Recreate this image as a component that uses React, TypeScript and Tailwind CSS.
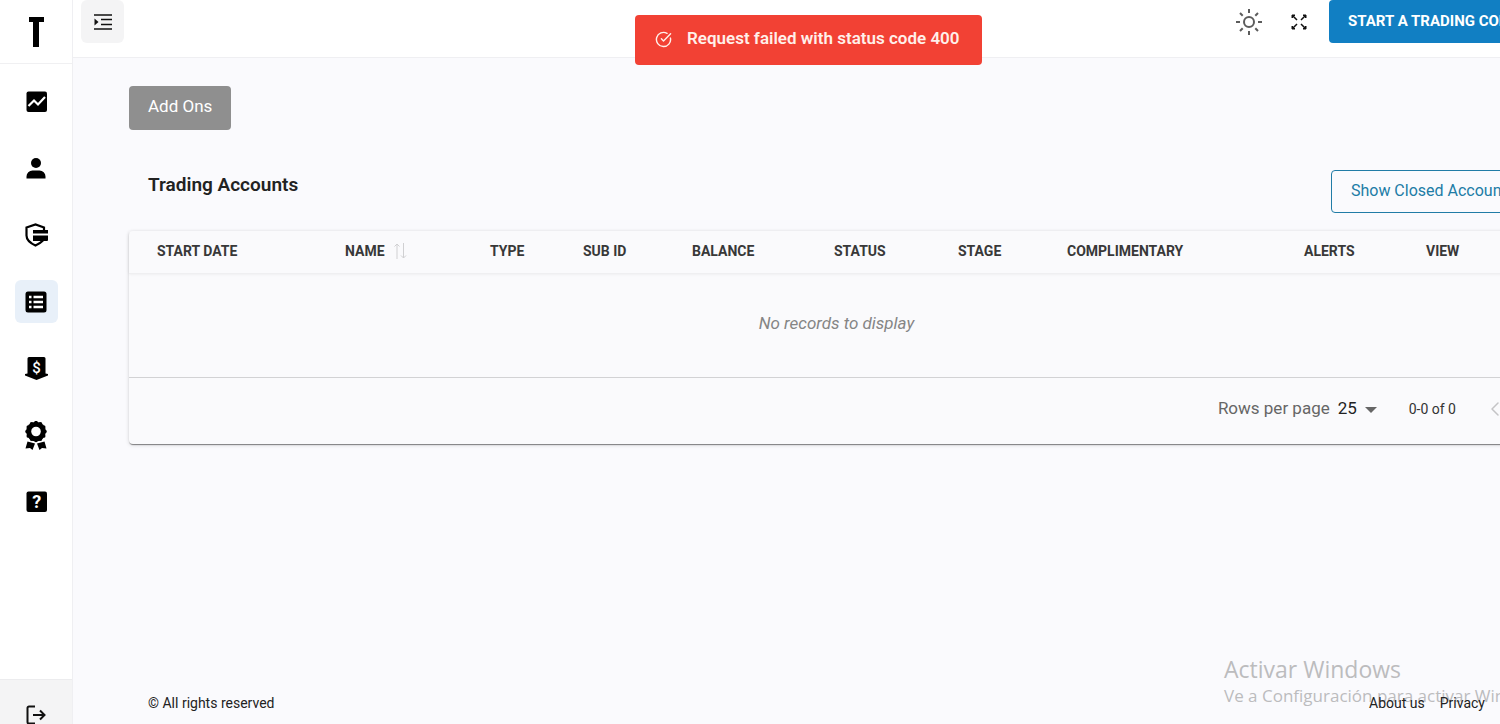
import type { ReactNode } from "react";
import { ChevronLeft, ChevronRight, CircleCheckBig } from "lucide-react";
import { clsx } from "clsx";

type IconProps = {
  children: ReactNode;
};

function NavIcon({ children }: IconProps) {
  return (
    <svg viewBox="0 0 24 24" className="h-6 w-6" fill="currentColor" aria-hidden="true">
      {children}
    </svg>
  );
}

const scallops = Array.from({ length: 12 }, (_, i) => {
  const angle = (i * Math.PI) / 6;
  return { cx: 12 + 8.8 * Math.cos(angle), cy: 10.5 + 8.8 * Math.sin(angle) };
});

const navItems = [
  {
    label: "Dashboard",
    icon: (
      <NavIcon>
        <rect x="2.5" y="2.5" width="20.5" height="20.5" rx="2" />
        <path d="M4.5 17 10 11.5l4 4 7-7.5" fill="none" stroke="#fff" strokeWidth="2.2" />
      </NavIcon>
    )
  },
  {
    label: "Profile",
    icon: (
      <NavIcon>
        <circle cx="12" cy="7" r="5" />
        <path d="M2.5 22.5v-2a6 6 0 0 1 6-6h7a6 6 0 0 1 6 6v2z" />
      </NavIcon>
    )
  },
  {
    label: "Subscriptions",
    icon: (
      <NavIcon>
        <path
          d="M20 9V4.5L11.5 1.500 2.500 4.500v8c0 4.500 3.500 7.500 9 10 3.500-1.500 6-3.500 7.500-5"
          fill="none"
          stroke="currentColor"
          strokeWidth="2.2"
        />
        <path d="M9 7h15v3.500H9zM9 12.500h15v4.500a1 1 0 0 1-1 1H9z" />
      </NavIcon>
    )
  },
  {
    label: "Accounts",
    active: true,
    icon: (
      <NavIcon>
        <rect x="1.5" y="1.5" width="21" height="21" rx="2.5" />
        <path
          d="M5 7h2.500M9.500 7H19M5 12h2.500M9.500 12H19M5 17h2.500M9.500 17H19"
          stroke="#fff"
          strokeWidth="2.4"
        />
      </NavIcon>
    )
  },
  {
    label: "Payouts",
    icon: (
      <NavIcon>
        <path d="M5 0h15a1.500 1.500 0 0 1 1.500 1.500V16.500l2.500.500V18.500l-11.500 4.500L1 18.500v-1.500l2.500-.500V1.500A1.500 1.500 0 0 1 5 0z" />
        <text x="12.5" y="16" textAnchor="middle" fill="#fff" fontSize="15" fontWeight="500" fontFamily="Roboto, sans-serif">
          $
        </text>
      </NavIcon>
    )
  },
  {
    label: "Certificates",
    icon: (
      <svg viewBox="0 0 24 30" className="h-[30px] w-6" fill="currentColor" aria-hidden="true">
        {scallops.map(({ cx, cy }) => (
          <circle key={`${cx}-${cy}`} cx={cx} cy={cy} r="1.9" />
        ))}
        <circle cx="12" cy="10.5" r="9.8" />
        <circle cx="12" cy="10.5" r="4.8" fill="#fff" />
        <path d="M3.500 20.500 11 22.500 8.500 29 6 27l-4.500.500zM20.500 20.500 13 22.500l2.500 6.500 2.500-2 4.500.500z" />
      </svg>
    )
  },
  {
    label: "Help",
    icon: (
      <NavIcon>
        <rect x="2.5" y="0.5" width="20.5" height="20.5" rx="2" />
        <text x="12.75" y="17" textAnchor="middle" fill="#fff" fontSize="18" fontWeight="700" fontFamily="Roboto, sans-serif">
          ?
        </text>
      </NavIcon>
    )
  }
];

const columns = [
  { label: "Start Date", width: "w-[204px]" },
  { label: "Name", width: "w-[145px]", sortable: true },
  { label: "Type", width: "w-[93px]" },
  { label: "Sub ID", width: "w-[109px]" },
  { label: "Balance", width: "w-[142px]" },
  { label: "Status", width: "w-[124px]" },
  { label: "Stage", width: "w-[109px]" },
  { label: "Complimentary", width: "w-[237px]" },
  { label: "Alerts", width: "w-[122px]" },
  { label: "View", width: "" }
];

function Sidebar() {
  return (
    <aside className="flex w-[73px] shrink-0 flex-col border-r border-[#efeff2] bg-white text-black">
      <a
        href="#home"
        aria-label="Home"
        className="flex h-16 shrink-0 flex-col items-center border-b border-[#f0f0f2] pt-[17px]"
      >
        <span className="h-[5px] w-[15px] bg-black" />
        <span className="h-[25px] w-[6px] bg-black" />
      </a>
      <nav className="flex flex-1 flex-col items-center gap-6 pt-[15px]">
        {navItems.map((item) => (
          <a
            key={item.label}
            href={`#${item.label.toLowerCase()}`}
            aria-label={item.label}
            className={clsx(
              "flex h-[43px] w-[43px] items-center justify-center rounded-md",
              item.active && "bg-[#e8f0f9]"
            )}
          >
            {item.icon}
          </a>
        ))}
      </nav>
      <button
        type="button"
        aria-label="Log out"
        className="flex h-[70px] shrink-0 items-center justify-center border-t border-[#ececee] bg-[#f4f4f5]"
      >
        <svg viewBox="0 0 20 20" className="h-5 w-5" fill="none" stroke="#111" strokeWidth="2" aria-hidden="true">
          <path d="M9 1.500H3A1.500 1.500 0 0 0 1.500 3v14A1.500 1.500 0 0 0 3 18.500h6M7 10h11M14 5.500l4.500 4.500-4.500 4.500" />
        </svg>
      </button>
    </aside>
  );
}

function Header() {
  return (
    <header className="flex h-[58px] shrink-0 items-start border-b border-[#efeff2] bg-white pr-6 pl-2">
      <button
        type="button"
        aria-label="Toggle menu"
        className="flex h-[43px] w-[43px] items-center justify-center rounded-md bg-[#f4f4f5]"
      >
        <svg viewBox="0 0 20 18" className="h-[18px] w-5" stroke="#111" aria-hidden="true">
          <path d="M1 2h18M1 16h18" strokeWidth="1.5" />
          <path d="M8 6.500h11M8 11.500h11" strokeWidth="1.5" />
          <path d="M1.500 5.500v7l4-3.500z" fill="#111" stroke="none" />
        </svg>
      </button>
      <div className="ml-auto flex items-center">
        <button type="button" aria-label="Toggle theme" className="mr-[29px]">
          <svg viewBox="0 0 26 26" className="h-[26px] w-[26px]" fill="none" stroke="#5c5c5c" strokeWidth="2" aria-hidden="true">
            <circle cx="13" cy="13" r="5" />
            <path d="M13 0v4M13 22v4M0 13h4M22 13h4M4 4l2.700 2.700M19.300 19.300 22 22M4 22l2.700-2.700M19.300 6.700 22 4" />
          </svg>
        </button>
        <button type="button" aria-label="Full screen" className="mr-[22px]">
          <svg viewBox="0 0 16 16" className="h-4 w-4" fill="#111" stroke="#111" strokeWidth="1.5" aria-hidden="true">
            <path d="m1.500 1.500 4.500 4.500M14.500 1.500 10 6M1.500 14.500 6 10M14.500 14.500 10 10" />
            <path d="M1 1h3L1 4zM15 1h-3l3 3zM1 15h3l-3-3zM15 15h-3l3-3z" strokeWidth="1" />
          </svg>
        </button>
        <button
          type="button"
          className="h-[43px] w-[247px] rounded-[4px] bg-[#117fc3] pl-[19px] text-left text-[15px] font-bold whitespace-nowrap text-white uppercase"
        >
          Start a Trading Combine
        </button>
      </div>
    </header>
  );
}

function AccountsTable() {
  return (
    <section className="rounded-[4px] bg-[#fafafc] shadow-[0_2px_1px_-1px_rgba(0,0,0,0.3),0_1px_1px_rgba(0,0,0,0.2),0_1px_4px_rgba(0,0,0,0.14)]">
      <table className="w-full table-fixed border-collapse">
        <thead>
          <tr className="h-[42px] border-b border-[#efeff1] shadow-[0_1px_3px_rgba(0,0,0,0.08)]">
            {columns.map((column) => (
              <th
                key={column.label}
                scope="col"
                className={clsx(
                  "pb-0.5 pl-3 text-left text-sm font-bold whitespace-nowrap text-[#383838] uppercase first:pl-7",
                  column.width
                )}
              >
                {column.sortable ? (
                  <button type="button" className="flex items-center gap-2 uppercase">
                    {column.label}
                    <svg viewBox="0 0 14 16" className="h-4 w-3.5" fill="none" stroke="#d0d0d2" aria-hidden="true">
                      <path d="M4 16V1M1.500 3.500 4 1l2.500 2.500M10.500 0v15M8 12.500l2.500 2.500 2.500-2.500" />
                    </svg>
                  </button>
                ) : (
                  column.label
                )}
              </th>
            ))}
          </tr>
        </thead>
        <tbody>
          <tr className="h-[104px] border-b border-[#d2d2d4]">
            <td colSpan={columns.length} className="pb-0.5 text-center text-[17px] text-[#858585] italic">
              No records to display
            </td>
          </tr>
        </tbody>
      </table>
      <div className="flex h-[66px] items-center justify-end pr-[7px] pb-1 text-[#333]">
        <label htmlFor="rows-per-page" className="mr-2 text-[17px] text-[#666]">
          Rows per page
        </label>
        <div className="relative mr-8">
          <select id="rows-per-page" defaultValue="25" className="w-[39px] appearance-none text-[17px] text-[#222]">
            <option>10</option>
            <option>25</option>
            <option>50</option>
          </select>
          <svg viewBox="0 0 12 6" className="pointer-events-none absolute top-[11px] right-0 h-1.5 w-3" fill="#666" aria-hidden="true">
            <path d="M0 0h12L6 6z" />
          </svg>
        </div>
        <span className="mr-[27px] text-sm">0-0 of 0</span>
        <button type="button" aria-label="Previous page" disabled className="mr-1.5 text-[#c4c4c6]">
          <ChevronLeft className="h-6 w-6" strokeWidth={1.5} />
        </button>
        <button type="button" aria-label="Next page" disabled className="text-[#c4c4c6]">
          <ChevronRight className="h-6 w-6" strokeWidth={1.5} />
        </button>
      </div>
    </section>
  );
}

export default function App() {
  return (
    <div className="relative h-screen overflow-hidden bg-[#fafafd] font-['Roboto',sans-serif] text-[#222]">
      <div className="flex h-[calc(100%+25px)] w-[calc(100%+100px)]">
        <Sidebar />
        <div className="flex min-w-0 flex-1 flex-col">
          <Header />
          <main className="flex-1 pt-7 pr-14 pl-14">
            <button type="button" className="h-11 rounded-[4px] bg-[#8f8f8f] px-[19px] pb-0.5 text-[17px] text-white">
              Add Ons
            </button>
            <div className="mt-10 mb-[18px] flex items-start justify-between pr-4 pl-[19px]">
              <h1 className="text-[19px] leading-[30px] font-semibold">Trading Accounts</h1>
              <button
                type="button"
                className="h-[43px] rounded-[4px] border border-[#217ca6] pr-3 pb-0.5 pl-[19px] text-base whitespace-nowrap text-[#217ca6]"
              >
                Show Closed Accounts
              </button>
            </div>
            <AccountsTable />
          </main>
          <footer className="flex items-center justify-between pr-[115px] pb-9 pl-[75px] text-sm">
            <p>© All rights reserved</p>
            <div className="z-10 flex gap-[15px]">
              <a href="#about">About us</a>
              <a href="#privacy">Privacy</a>
            </div>
          </footer>
        </div>
      </div>

      <div
        role="alert"
        className="absolute top-[15px] left-[635px] flex h-[50px] w-[347px] items-center gap-[15px] rounded-[4px] bg-[#f24134] pb-0.5 pl-5 text-[17px] font-semibold whitespace-nowrap text-[#fff0ea]"
      >
        <CircleCheckBig className="h-[17px] w-[17px] shrink-0" aria-hidden="true" />
        Request failed with status code 400
      </div>

      <div className="pointer-events-none absolute bottom-4 left-[1224px] font-['Open_Sans',sans-serif] whitespace-nowrap text-[#bcbcbe]">
        <p className="text-[23px] leading-[30px]">Activar Windows</p>
        <p className="text-[17px] leading-6">Ve a Configuración para activar Windows.</p>
      </div>
    </div>
  );
}
